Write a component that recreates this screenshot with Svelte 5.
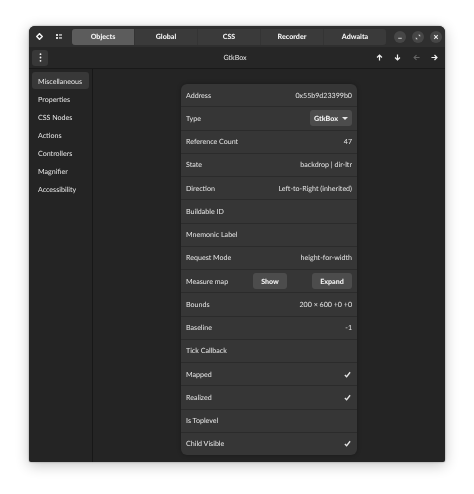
<script lang="ts">
  type Row = { label: string; value?: string; check?: boolean; kind?: string };

  const tabs = ['Objects', 'Global', 'CSS', 'Recorder', 'Adwaita'];
  const pages = ['Miscellaneous', 'Properties', 'CSS Nodes', 'Actions', 'Controllers', 'Magnifier', 'Accessibility'];

  const rows: Row[] = [
    { label: 'Address', value: '0x55b9d23399b0' },
    { label: 'Type', kind: 'type' },
    { label: 'Reference Count', value: '47' },
    { label: 'State', value: 'backdrop | dir-ltr' },
    { label: 'Direction', value: 'Left-to-Right (inherited)' },
    { label: 'Buildable ID' },
    { label: 'Mnemonic Label' },
    { label: 'Request Mode', value: 'height-for-width' },
    { label: 'Measure map', kind: 'measure' },
    { label: 'Bounds', value: '200 × 600 +0 +0' },
    { label: 'Baseline', value: '-1' },
    { label: 'Tick Callback' },
    { label: 'Mapped', check: true },
    { label: 'Realized', check: true },
    { label: 'Is Toplevel' },
    { label: 'Child Visible', check: true }
  ];
</script>

<div class="page">
  <div class="window">
    <header class="titlebar">
      <div class="tool">
        <svg width="7" height="7" viewBox="0 0 7 7"><path d="M3.5 0.7 6.3 3.5 3.5 6.3 0.7 3.5Z" fill="none" stroke="#f2f2f2" stroke-width="1.5"/></svg>
      </div>
      <div class="tool">
        <svg width="6" height="5" viewBox="0 0 6 5" fill="#d8d8d8"><rect x="0" y="0" width="2" height="2"/><rect x="3" y="0.3" width="3" height="1.3"/><rect x="0" y="3" width="2" height="2"/><rect x="3" y="3.3" width="3" height="1.3"/></svg>
      </div>
      <nav class="tabs">
        {#each tabs as t, i}
          <div class="tab" class:active={i === 0}>{t}</div>
        {/each}
      </nav>
      <div class="controls">
        <span class="ctl">
          <svg width="6" height="6" viewBox="0 0 6 6"><rect x="1.2" y="3.8" width="3.6" height="0.9" fill="#d8d8d8"/></svg>
        </span>
        <span class="ctl">
          <svg width="6" height="6" viewBox="0 0 6 6" fill="#d8d8d8"><path d="M3.2 0.8H5.2V2.8Z"/><path d="M0.8 3.2V5.2H2.8Z"/></svg>
        </span>
        <span class="ctl">
          <svg width="6" height="6" viewBox="0 0 6 6"><path d="M1.2 1.2 4.8 4.8M4.8 1.2 1.2 4.8" stroke="#e8e8e8" stroke-width="1.1"/></svg>
        </span>
      </div>
    </header>

    <div class="subbar">
      <button class="menu" aria-label="Menu">
        <svg width="3" height="9" viewBox="0 0 3 9" fill="#f0f0f0"><circle cx="1.5" cy="1.2" r="0.9"/><circle cx="1.5" cy="4.5" r="0.9"/><circle cx="1.5" cy="7.8" r="0.9"/></svg>
      </button>
      <div class="title">GtkBox</div>
      <div class="arrows">
        <svg width="7" height="7" viewBox="0 0 8 8"><path d="M4 7.5V1.5M1.2 4 4 1.2 6.8 4" fill="none" stroke="#f0f0f0" stroke-width="1.4"/></svg>
        <svg width="7" height="7" viewBox="0 0 8 8"><path d="M4 .5V6.5M1.2 4 4 6.8 6.8 4" fill="none" stroke="#f0f0f0" stroke-width="1.4"/></svg>
        <svg width="7" height="7" viewBox="0 0 8 8"><path d="M7.5 4H1.5M4 1.2 1.2 4 4 6.8" fill="none" stroke="#666" stroke-width="1.2"/></svg>
        <svg width="7" height="7" viewBox="0 0 8 8"><path d="M.5 4H6.5M4 1.2 6.8 4 4 6.8" fill="none" stroke="#f0f0f0" stroke-width="1.4"/></svg>
      </div>
    </div>

    <div class="body">
      <aside class="sidebar">
        {#each pages as p, i}
          <div class="page-item" class:selected={i === 0}>{p}</div>
        {/each}
      </aside>
      <main class="content">
        <div class="list">
          {#each rows as r}
            <div class="row">
              <span class="label" class:wide={r.kind === 'measure'}>{r.label}</span>
              {#if r.kind === 'type'}
                <span class="btn combo">GtkBox <i class="caret"></i></span>
              {:else if r.kind === 'measure'}
                <span class="btn show">Show</span>
                <span class="btn expand">Expand</span>
              {:else if r.check}
                <svg class="check" width="7" height="7" viewBox="0 0 8 8"><path d="M1 4.6 3 6.6 7 1.4" fill="none" stroke="#e4e4e4" stroke-width="1.5"/></svg>
              {:else if r.value}
                <span class="value">{r.value}</span>
              {/if}
            </div>
          {/each}
        </div>
      </main>
    </div>
  </div>
</div>

<style>
  :global(body) {
    background: #fff;
    font-family: Lato, "Noto Sans", sans-serif;
    text-rendering: geometricPrecision;
  }

  .page {
    width: 474px;
    height: 494px;
    padding: 26px 29px 32px;
    box-sizing: border-box;
  }

  .window {
    height: 436px;
    display: flex;
    flex-direction: column;
    background: #242424;
    border-radius: 6px 6px 2px 2px;
    box-shadow: 0 3px 14px rgba(0, 0, 0, 0.24), 0 0 2px rgba(0, 0, 0, 0.45);
    overflow: hidden;
    color: #e6e6e6;
    font-size: 7.1px;
    will-change: transform; /* grey text antialiasing */
  }

  /* Header */
  .titlebar {
    height: 21px;
    flex: none;
    display: flex;
    align-items: center;
    background: #2f2f2f;
    box-sizing: border-box;
    padding-left: 1px;
  }
  .tool {
    width: 19px;
    display: flex;
    justify-content: center;
  }
  .tabs {
    display: flex;
    width: 314px;
    height: 16px;
    margin-left: 4px;
    background: #3a3a3a;
    border-radius: 3px;
    overflow: hidden;
  }
  .tab {
    flex: 1;
    display: flex;
    align-items: center;
    justify-content: center;
    font-weight: 900;
    color: #f2f2f2;
    border-left: 1px solid #343434;
  }
  .tab:first-child { border-left: none; }
  .tab.active { background: #5c5c5c; }

  .controls {
    display: flex;
    gap: 6px;
    margin-left: 8px;
  }
  .ctl {
    width: 12px;
    height: 12px;
    border-radius: 50%;
    background: #464646;
    display: flex;
    align-items: center;
    justify-content: center;
  }

  .subbar {
    height: 22px;
    flex: none;
    display: grid;
    grid-template-columns: 1fr auto 1fr;
    align-items: center;
    background: #262626;
    border-bottom: 1px solid #191919;
    box-sizing: border-box;
    padding: 0 7px 0 3px;
  }
  .menu {
    width: 16px;
    height: 16px;
    border: none;
    border-radius: 3px;
    background: #383838;
    display: flex;
    align-items: center;
    justify-content: center;
    padding: 0;
  }
  .arrows {
    display: flex;
    justify-content: flex-end;
    gap: 11.5px;
  }

  /* Body */
  .body {
    flex: 1;
    display: flex;
    min-height: 0;
  }
  .sidebar {
    width: 64px;
    flex: none;
    box-sizing: border-box;
    padding: 3px;
    border-right: 1px solid #171717;
    display: flex;
    flex-direction: column;
    gap: 1px;
  }
  .page-item {
    height: 17px;
    box-sizing: border-box;
    display: flex;
    align-items: center;
    padding: 1px 0 0 6px;
    border-radius: 3px;
    white-space: nowrap;
  }
  .page-item.selected { background: #383838; }

  .content {
    flex: 1;
    display: flex;
    justify-content: center;
    padding-top: 15px;
  }
  .list {
    width: 176px;
    height: 371px;
    display: flex;
    flex-direction: column;
    background: #363636;
    border-radius: 6px;
    box-shadow: 0 0 4px rgba(0, 0, 0, 0.3);
    overflow: hidden;
  }
  .row {
    flex: 1;
    display: flex;
    align-items: center;
    justify-content: space-between;
    padding: 0 5px;
    border-bottom: 1px solid #2b2b2b;
  }
  .row:last-child { border-bottom: none; }
  .label.wide {
    flex: none;
    width: 67px;
  }
  .check { margin-right: 1px; }

  .btn {
    height: 16px;
    display: inline-flex;
    align-items: center;
    justify-content: center;
    background: #4c4c4c;
    border-radius: 3px;
    font-weight: 900;
    color: #f2f2f2;
  }
  .combo {
    width: 42px;
    gap: 4px;
  }
  .caret {
    width: 0;
    height: 0;
    border-left: 3px solid transparent;
    border-right: 3px solid transparent;
    border-top: 3px solid #e6e6e6;
  }
  .show { width: 34px; }
  .expand {
    width: 40px;
    margin-left: auto;
  }
</style>
